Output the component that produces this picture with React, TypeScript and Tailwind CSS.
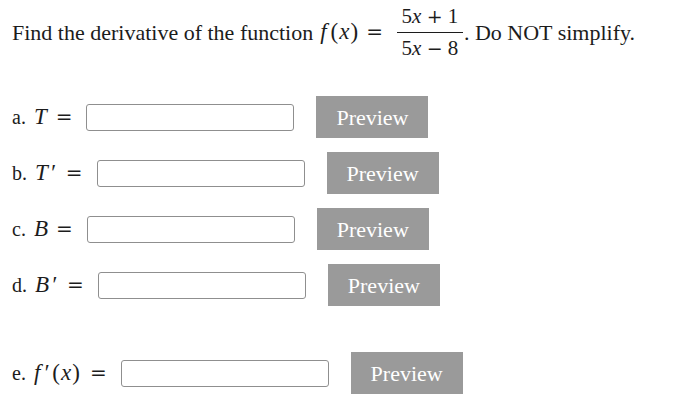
import React from 'react';

const serif = { fontFamily: '"Liberation Serif", "Times New Roman", serif' };
const mathSym = { fontFamily: '"DejaVu Serif", serif' };

interface RowProps {
  letter: string;
  label: React.ReactNode;
  eqGap: string;
  className?: string;
}

const Row: React.FC<RowProps> = ({ letter, label, eqGap, className = '' }) => {
  return <div className={`flex items-center h-[42px] ${className}`}>
      <span className="text-[20px] text-[#1c1c1c] whitespace-nowrap flex items-baseline">
        <span>{letter}.</span>
        <span className="ml-[8px] text-[23px]">{label}</span>
        <span className={`${eqGap} text-[20px]`} style={mathSym}>=</span>
      </span>
      <input type="text" className="ml-[14px] w-[208px] h-[27px] border border-[#8f8f8f] rounded-[3px] bg-white outline-none" />
      <button className="ml-[22px] w-[112px] h-[42px] bg-[#9a9a9a] text-white text-[22px]">
        Preview
      </button>
    </div>;
};

const App: React.FC = () => {
  return <div className="w-[700px] h-[409px] bg-white pl-[12px] text-[#1c1c1c]" style={serif}>
      <div className="flex items-center h-[64px] text-[22px]">
        <span>Find the derivative of the function</span>
        <span className="ml-[7px] italic text-[23px]">f</span>
        <span className="ml-[4px] text-[23px]">(<span className="italic mx-[1px]">x</span>)</span>
        <span className="ml-[8px] text-[20px]" style={mathSym}>=</span>
        <span className="ml-[14px] inline-flex flex-col items-center text-[21px] leading-none">
          <span className="pb-[5px]"><span>5</span><span className="italic">x</span> <span style={mathSym} className="text-[19px]">+</span> 1</span>
          <span className="w-[66px] border-t-[1.5px] border-[#1c1c1c]"></span>
          <span className="pt-[5px]"><span>5</span><span className="italic">x</span> <span style={mathSym} className="text-[19px]">−</span> 8</span>
        </span>
        <span className="ml-[1px]">. Do NOT simplify.</span>
      </div>
      <div className="mt-[32px] flex flex-col gap-[14px]">
        <Row letter="a" eqGap="ml-[9px]" label={<span className="italic">T</span>} />
        <Row letter="b" eqGap="ml-[11px]" label={<span className="italic">T<span className="ml-[2px]">′</span></span>} />
        <Row letter="c" eqGap="ml-[8px]" label={<span className="italic">B</span>} />
        <Row letter="d" eqGap="ml-[11px]" label={<span className="italic">B<span className="ml-[2px]">′</span></span>} />
        <Row letter="e" eqGap="ml-[10px]" label={<span><span className="italic">f<span className="ml-[3px]">′</span></span><span className="ml-[4px]">(<span className="italic mx-[1px]">x</span>)</span></span>} className="mt-[32px]" />
      </div>
    </div>;
};

export default App;
